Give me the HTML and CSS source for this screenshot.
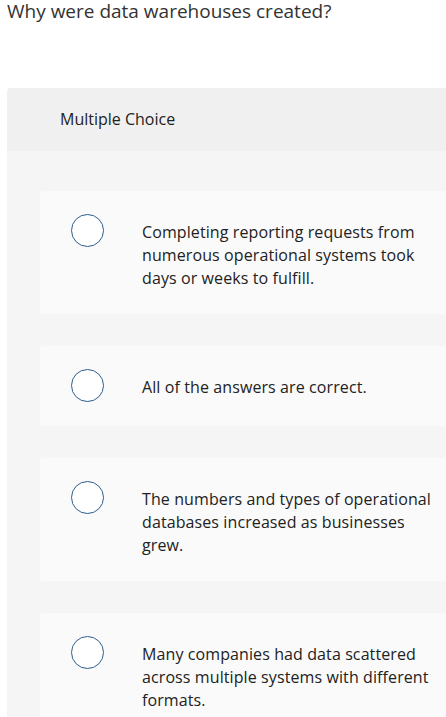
FILE: index.html
```html
<!DOCTYPE html>
<html>
<head>
<meta charset="utf-8">
<link rel="stylesheet" href="styles.css">
</head>
<body>
<h1 class="question">Why were data warehouses created?</h1>
<div class="panel">
  <div class="panel-header">Multiple Choice</div>
  <div class="panel-body">
    <div class="option">
      <span class="radio"></span>
      <div class="option-text">Completing reporting requests from numerous operational systems took days or weeks to fulfill.</div>
    </div>
    <div class="option">
      <span class="radio"></span>
      <div class="option-text">All of the answers are correct.</div>
    </div>
    <div class="option">
      <span class="radio"></span>
      <div class="option-text">The numbers and types of operational databases increased as businesses grew.</div>
    </div>
    <div class="option">
      <span class="radio"></span>
      <div class="option-text">Many companies had data scattered across multiple systems with different formats.</div>
    </div>
  </div>
</div>
</body>
</html>
```
FILE: styles.css
```css
html, body {
  margin: 0;
  padding: 0;
  background: #ffffff;
  overflow: hidden;
}
body {
  font-family: "Open Sans", "Liberation Sans", sans-serif;
  color: #222;
}
.question {
  margin: 0;
  padding: 0 0 0 7px;
  box-sizing: border-box;
  font-size: 19px;
  font-weight: 400;
  line-height: 22px;
  color: #333;
  height: 88px;
}
.panel {
  margin-left: 7px;
  background: #f5f5f5;
  border-top-left-radius: 4px;
  overflow: hidden;
}
.panel-header {
  background: #f0f0f0;
  height: 63px;
  box-sizing: border-box;
  padding: 20px 0 0 53px;
  font-size: 16px;
  line-height: 22px;
  color: #222;
}
.panel-body {
  padding: 40px 0 40px 33px;
  display: flex;
  flex-direction: column;
  gap: 32px;
}
.option {
  background: #fafafa;
  border-radius: 4px 0 0 4px;
  display: flex;
  align-items: flex-start;
  padding: 23px 0 24px 31px;
}
.radio {
  flex: none;
  width: 31px;
  height: 31px;
  border: 1.5px solid #2f5d8a;
  border-radius: 50%;
  background: #fff;
}
.option-text {
  margin-left: 38px;
  padding-top: 7px;
  width: 300px;
  font-size: 16px;
  line-height: 23px;
  letter-spacing: 0.1px;
  color: #222;
}
```
